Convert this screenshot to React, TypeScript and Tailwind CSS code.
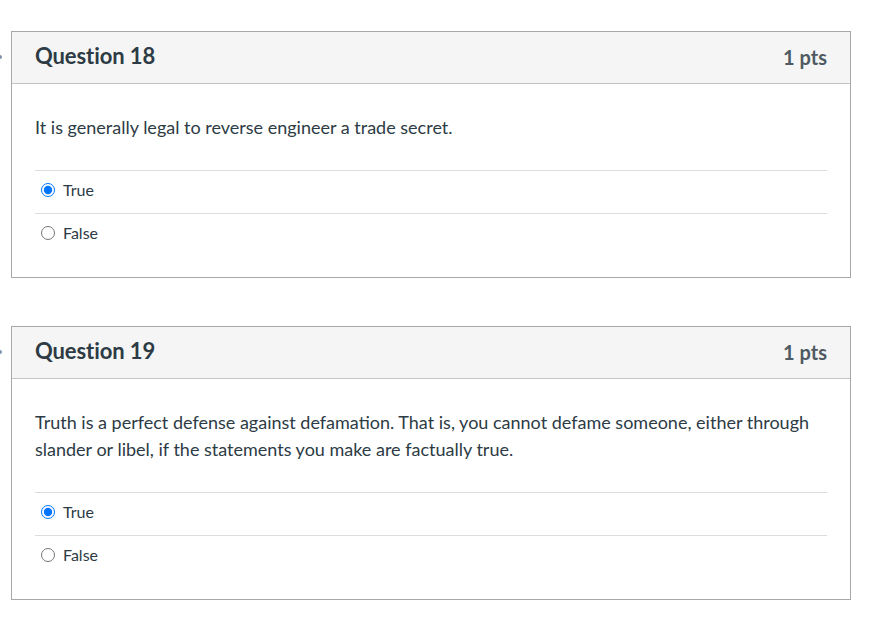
import React from "react";

interface Answer {
  label: string;
  checked: boolean;
}

interface QuestionCardProps {
  number: number;
  points: string;
  text: React.ReactNode;
  answers: Answer[];
}

const QuestionCard: React.FC<QuestionCardProps> = ({ number, points, text, answers }) => {
  return (
    <div className="relative border border-[#a8a8a8] bg-white">
      <span className="absolute -left-[12px] top-[23px] w-[2px] h-[4px] rounded-r bg-[#7f93ab]" />
      <div className="flex items-center justify-between h-[52px] bg-[#f5f5f5] border-b border-[#c4c4c4] pl-[23px] pr-[23px] pb-[4px]">
        <h2 className="text-[22px] font-bold text-[#2d3b45] tracking-[-0.1px]">Question {number}</h2>
        <span className="text-[20px] font-bold text-[#4f5a62] pt-[2px]">{points}</span>
      </div>
      <div className="px-[23px] pt-[30px] pb-[22px]">
        <div className="text-[18px] leading-[27px] text-[#2d3b45]">{text}</div>
        <div className="mt-[29px]">
          {answers.map((a, i) => (
            <label
              key={a.label}
              className={
                "flex items-center gap-[8px] pl-[6px] pb-[4px] border-t border-[#dddddd] text-[16px] text-[#2d3b45] " +
                (i === 0 ? "h-[43px]" : "h-[42px]")
              }
            >
              <input type="radio" name={"q" + number} defaultChecked={a.checked} className="w-[14px] h-[14px] m-0" />
              <span>{a.label}</span>
            </label>
          ))}
        </div>
      </div>
    </div>
  );
};

export default function App() {
  return (
    <div
      className="min-h-[634px] bg-white pt-[31px] pl-[11px] pr-[45px] flex flex-col gap-[48px]"
      style={{ fontFamily: "Lato, 'Noto Sans', sans-serif" }}
    >
      <QuestionCard
        number={18}
        points="1 pts"
        text="It is generally legal to reverse engineer a trade secret."
        answers={[
          { label: "True", checked: true },
          { label: "False", checked: false },
        ]}
      />
      <QuestionCard
        number={19}
        points="1 pts"
        text={
          <>
            Truth is a perfect defense against defamation. That is, you cannot defame someone, either through
            <br />
            slander or libel, if the statements you make are factually true.
          </>
        }
        answers={[
          { label: "True", checked: true },
          { label: "False", checked: false },
        ]}
      />
    </div>
  );
}
